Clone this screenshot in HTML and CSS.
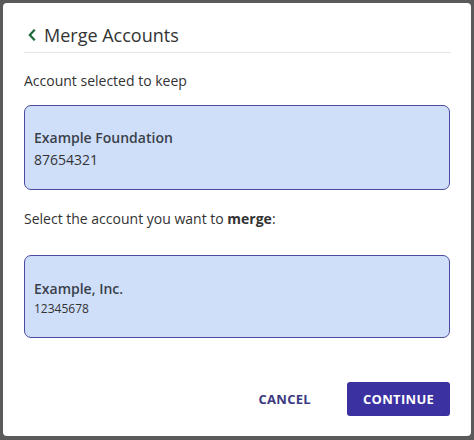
FILE: index.html
```html
<!DOCTYPE html>
<html lang="en">
<head>
<meta charset="utf-8">
<title>Merge Accounts</title>
<link rel="stylesheet" href="styles.css">
</head>
<body>
<div class="dialog">
  <div class="header">
    <span class="back" aria-label="Back">
      <svg width="8" height="12" viewBox="0 0 8 12"><path d="M6 1.5 L1.8 6 L6 10.5" fill="none" stroke="#1d6b3c" stroke-width="2.2" stroke-linecap="square"/></svg>
    </span>
    <h1 class="title">Merge Accounts</h1>
  </div>
  <p class="label first">Account selected to keep</p>
  <div class="account big">
    <div class="acct-name">Example Foundation</div>
    <div class="acct-num">87654321</div>
  </div>
  <p class="label second">Select the account you want to <b>merge</b>:</p>
  <div class="account small">
    <div class="acct-name">Example, Inc.</div>
    <div class="acct-num">12345678</div>
  </div>
  <div class="footer">
    <button class="btn cancel">CANCEL</button>
    <button class="btn continue">CONTINUE</button>
  </div>
</div>
</body>
</html>
```
FILE: styles.css
```css
* { box-sizing: border-box; }
html, body { margin: 0; height: 100%; }
body {
  background: #5a5a5a;
  font-family: "Open Sans", "Noto Sans", sans-serif;
  color: #333;
  padding: 3px 3px 4px 3px;
}
.dialog {
  background: #fff;
  border-radius: 4px;
  height: 433px;
  display: flex;
  flex-direction: column;
  padding: 0 20px 20px 21px;
}
.header {
  display: flex;
  align-items: center;
  gap: 8px;
  padding: 19px 0 4px 0;
  border-bottom: 1px solid #e6e6e6;
}
.back {
  display: flex;
  width: 12px;
  justify-content: flex-end;
}
.title {
  margin: 0;
  font-size: 18px;
  line-height: 26px;
  font-weight: 500;
  color: #333;
}
.label {
  margin: 0;
  font-size: 14px;
  line-height: 20px;
  color: #333;
}
.label b { font-weight: 700; }
.label.first { margin-top: 18px; }
.label.second { margin-top: 19px; }
.account {
  background: #cfdffa;
  border: 1.5px solid #4b4a9e;
  border-radius: 7px;
  padding: 22px 9px 19px 9px;
  margin-right: 1px;
}
.account.big { margin-top: 14px; }
.account.small { margin-top: 26px; padding-top: 23px; padding-bottom: 19px; }
.acct-name {
  font-size: 14px;
  line-height: 20px;
  font-weight: 600;
  color: #3a3f4a;
}
.big .acct-num { font-size: 14px; line-height: 20px; margin-top: 2px; color: #333; }
.small .acct-num { font-size: 12px; line-height: 18px; margin-top: 1px; color: #333; }
.footer {
  margin-top: auto;
  display: flex;
  justify-content: flex-end;
  align-items: center;
  gap: 20px;
  margin-right: 1px;
}
.btn {
  font-family: "Open Sans", "Noto Sans", sans-serif;
  font-size: 13px;
  font-weight: 700;
  letter-spacing: 0.3px;
  border: none;
  border-radius: 3px;
  height: 34px;
  padding: 0 16px;
  cursor: pointer;
}
.cancel { background: transparent; color: #3b3a80; }
.continue { background: #3b31a0; color: #fff; width: 103px; }
```
